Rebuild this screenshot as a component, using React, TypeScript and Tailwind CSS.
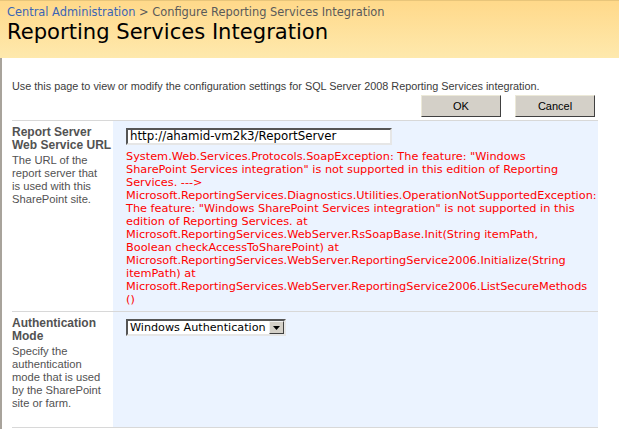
const errorLines = [
  'System.Web.Services.Protocols.SoapException: The feature: "Windows',
  'SharePoint Services integration" is not supported in this edition of Reporting',
  "Services. --->",
  "Microsoft.ReportingServices.Diagnostics.Utilities.OperationNotSupportedException:",
  'The feature: "Windows SharePoint Services integration" is not supported in this',
  "edition of Reporting Services. at",
  "Microsoft.ReportingServices.WebServer.RsSoapBase.Init(String itemPath,",
  "Boolean checkAccessToSharePoint) at",
  "Microsoft.ReportingServices.WebServer.ReportingService2006.Initialize(String",
  "itemPath) at",
  "Microsoft.ReportingServices.WebServer.ReportingService2006.ListSecureMethods",
  "()",
];

const verdana = "font-['DejaVu_Sans',Verdana,sans-serif]";
const tahoma = "font-['Liberation_Sans',Tahoma,sans-serif]";

function Section({ title, lines, children }: { title: string[]; lines: string[]; children: React.ReactNode }) {
  return (
    <div className="flex border-b border-[#d8d8d8]">
      <div className={`w-[101px] shrink-0 pt-[5px] pb-2 text-[11.2px] leading-[13px] text-[#525252] ${tahoma}`}>
        {title.map((t) => (
          <div key={t} className="font-bold text-[12px]">{t}</div>
        ))}
        <div className="mt-[2px]">
          {lines.map((l) => (
            <div key={l}>{l}</div>
          ))}
        </div>
      </div>
      <div className="flex-1 bg-[#ebf3ff] pl-[13px] pt-[7px] pb-[5px]">{children}</div>
    </div>
  );
}

export default function App() {
  return (
    <div className="w-[619px] h-[429px] bg-white overflow-hidden">
      {/* title area */}
      <div className="h-[58px] bg-gradient-to-b from-[#ffd98a] to-[#fee9ad] border-t border-[#e8c57a] pl-[7px]">
        <div className={`pt-[4px] text-[11.4px] leading-[14px] ${verdana}`}>
          <span className="text-[#3b65b5]">Central Administration</span>
          <span className="text-[#5a5a5a]"> &gt; Configure Reporting Services Integration</span>
        </div>
        <div className={`text-[21.1px] leading-[26px] text-black ${verdana}`}>Reporting Services Integration</div>
      </div>

      <div className="h-[371px] border-l-2 border-[#a8a39b] pl-[10px] pr-[21px]">
        <div className={`pt-[21px] text-[10.85px] leading-[14px] text-[#3c3c3c] ${tahoma}`}>
          Use this page to view or modify the configuration settings for SQL Server 2008 Reporting Services integration.
        </div>
        <div className={`flex justify-end gap-[14px] mt-[2px] mr-[3px] ${tahoma}`}>
          {["OK", "Cancel"].map((b) => (
            <div
              key={b}
              className="w-[80px] h-[22px] flex items-center justify-center bg-[#d4d0c8] text-[11px] text-black border border-t-[#ece9d8] border-l-[#ece9d8] border-r-[#404040] border-b-[#404040]"
            >
              {b}
            </div>
          ))}
        </div>

        <div className="mt-[3px] border-t border-[#d8d8d8]">
          <Section
            title={["Report Server", "Web Service URL"]}
            lines={["The URL of the", "report server that", "is used with this", "SharePoint site."]}
          >
            <div
              className={`w-[266px] h-[17px] bg-white border-2 border-t-[#555] border-l-[#555] border-r-[#e6e6e6] border-b-[#e6e6e6] px-[2px] text-[11.8px] leading-[13px] text-black ${verdana}`}
            >
              http://ahamid-vm2k3/ReportServer
            </div>
            <div className={`mt-[5px] text-[11.3px] leading-[13px] text-[#ff0000] whitespace-nowrap ${verdana}`}>
              {errorLines.map((l) => (
                <div key={l}>{l}</div>
              ))}
            </div>
          </Section>
          <Section
            title={["Authentication", "Mode"]}
            lines={["Specify the", "authentication", "mode that is used", "by the SharePoint", "site or farm."]}
          >
            <div className="h-[103px]">
              <div className="w-[160px] h-[17px] flex bg-white border-2 border-t-[#555] border-l-[#555] border-r-[#e6e6e6] border-b-[#e6e6e6]">
                <div className={`flex-1 pl-[2px] text-[11.2px] leading-[13px] text-black ${verdana}`}>Windows Authentication</div>
                <div className="w-[15px] h-[13px] bg-[#d4d0c8] border border-t-[#f0f0f0] border-l-[#f0f0f0] border-r-[#404040] border-b-[#404040] flex items-center justify-center">
                  <svg width="7" height="4" viewBox="0 0 7 4">
                    <path d="M0 0h7L3.5 4z" fill="#000" />
                  </svg>
                </div>
              </div>
            </div>
          </Section>
        </div>
      </div>
    </div>
  );
}
